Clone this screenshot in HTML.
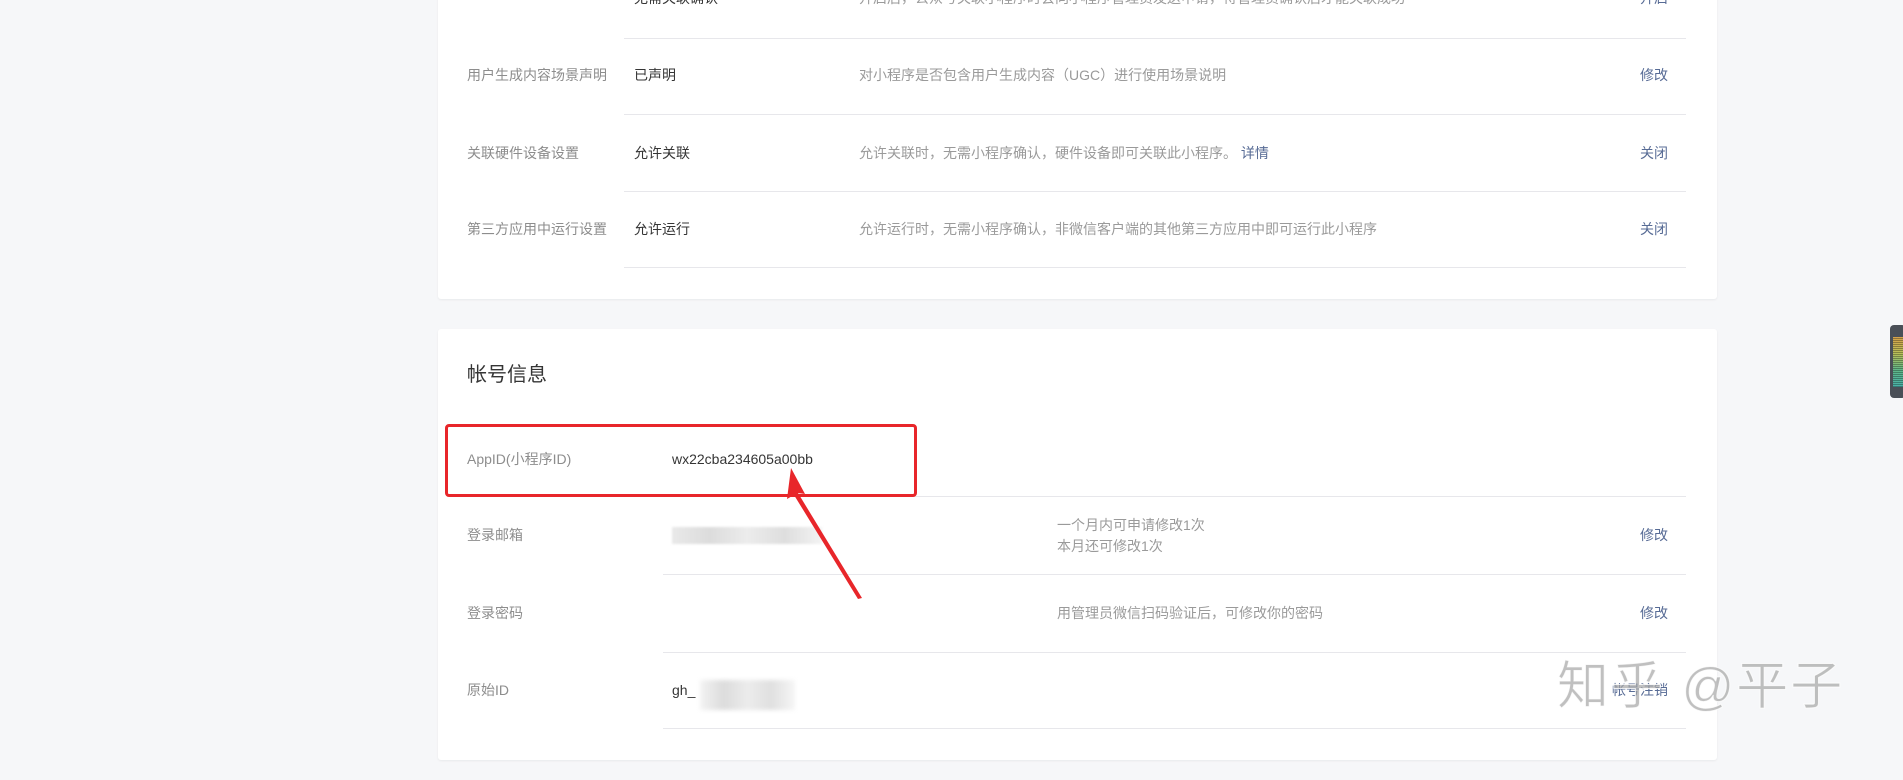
<!DOCTYPE html>
<html><head><meta charset="utf-8"><style>
body{margin:0;width:1903px;height:780px;background:#f6f7f9;overflow:hidden;position:relative;font-family:"Liberation Sans","Noto Sans CJK SC",sans-serif;font-size:14px}
.card{position:absolute;left:438px;width:1279px;background:#fff;border-radius:3px;box-shadow:0 1px 2px rgba(0,0,0,.06)}
.t{position:absolute;white-space:nowrap;line-height:18px}
.lb{color:#8d8d8d}.v{color:#353535}.d{color:#9a9a9a}.a{color:#576b95}
.ln{position:absolute;height:1px;background:#e7e7eb}
</style></head><body>
<div class="card" style="top:-10px;height:309px"></div>
<div class="card" style="top:329px;height:431px"></div>

<div class="t v" style="left:634px;top:-11px">无需关联确认</div>
<div class="t d" style="left:859px;top:-11px">开启后，公众号关联小程序时会向小程序管理员发送申请，待管理员确认后才能关联成功</div>
<div class="t a" style="left:1640px;top:-11px">开启</div>
<div class="ln" style="left:624px;width:1062px;top:38px"></div>

<div class="t lb" style="left:467px;top:66px">用户生成内容场景声明</div>
<div class="t v" style="left:634px;top:66px">已声明</div>
<div class="t d" style="left:859px;top:66px">对小程序是否包含用户生成内容（UGC）进行使用场景说明</div>
<div class="t a" style="left:1640px;top:66px">修改</div>
<div class="ln" style="left:624px;width:1062px;top:114px"></div>

<div class="t lb" style="left:467px;top:144px">关联硬件设备设置</div>
<div class="t v" style="left:634px;top:144px">允许关联</div>
<div class="t d" style="left:859px;top:144px">允许关联时，无需小程序确认，硬件设备即可关联此小程序。 <span class="a">详情</span></div>
<div class="t a" style="left:1640px;top:144px">关闭</div>
<div class="ln" style="left:624px;width:1062px;top:191px"></div>

<div class="t lb" style="left:467px;top:220px">第三方应用中运行设置</div>
<div class="t v" style="left:634px;top:220px">允许运行</div>
<div class="t d" style="left:859px;top:220px">允许运行时，无需小程序确认，非微信客户端的其他第三方应用中即可运行此小程序</div>
<div class="t a" style="left:1640px;top:220px">关闭</div>
<div class="ln" style="left:624px;width:1062px;top:267px"></div>

<div class="t" style="left:467px;top:362px;font-size:20px;line-height:26px;color:#353535">帐号信息</div>

<div class="t lb" style="left:467px;top:450px">AppID(小程序ID)</div>
<div class="t v" style="left:672px;top:450px">wx22cba234605a00bb</div>
<div class="ln" style="left:663px;width:1023px;top:496px"></div>
<div style="position:absolute;left:445px;top:424px;width:466px;height:67px;border:3px solid #e8262a;border-radius:4px"></div>

<div class="t lb" style="left:467px;top:526px">登录邮箱</div>
<div style="position:absolute;left:672px;top:527px;width:150px;height:17px;background:linear-gradient(90deg,#e9e9e9,#dcdcdc,#ececec,#dedede,#f3f3f3);filter:blur(1px)"></div>
<div class="t d" style="left:1057px;top:516px">一个月内可申请修改1次</div>
<div class="t d" style="left:1057px;top:537px">本月还可修改1次</div>
<div class="t a" style="left:1640px;top:526px">修改</div>
<div class="ln" style="left:663px;width:1023px;top:574px"></div>

<div class="t lb" style="left:467px;top:604px">登录密码</div>
<div class="t d" style="left:1057px;top:604px">用管理员微信扫码验证后，可修改你的密码</div>
<div class="t a" style="left:1640px;top:604px">修改</div>
<div class="ln" style="left:663px;width:1023px;top:652px"></div>

<div class="t lb" style="left:467px;top:681px">原始ID</div>
<div class="t v" style="left:672px;top:681px">gh_</div>
<div style="position:absolute;left:700px;top:680px;width:95px;height:30px;background:linear-gradient(90deg,#f3f3f3,#dcdcdc,#ececec,#e0e0e0,#f6f6f6);filter:blur(2px)"></div>
<div class="t a" style="left:1612px;top:681px">帐号注销</div>
<div class="ln" style="left:663px;width:1023px;top:728px"></div>

<svg style="position:absolute;left:0;top:0" width="1903" height="780">
<polygon points="791,468 805,494 798,493 862,598 858,599 794,495 787,499" fill="#e8262a"/>
</svg>

<div class="t" style="left:1557px;top:656px;font-size:52px;line-height:62px;color:rgba(165,165,165,.7);-webkit-text-stroke:1px rgba(255,255,255,.8);letter-spacing:2px">知乎 @平子</div>

<div style="position:absolute;left:1890px;top:325px;width:16px;height:73px;background:#4a4f57;border-radius:4px">
<div style="margin:12px 3px 8px 3px;height:50px;background:repeating-linear-gradient(180deg,transparent 0 1px,rgba(0,0,0,.3) 1px 2px),linear-gradient(180deg,#d6a24a,#b8c05a,#5fb88a,#4ab0a8)"></div></div>
</body></html>
